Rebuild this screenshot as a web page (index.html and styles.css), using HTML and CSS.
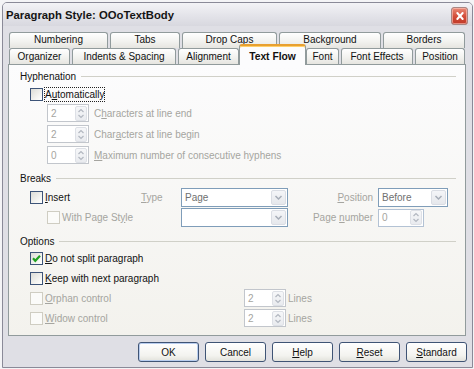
FILE: index.html
```html
<!DOCTYPE html>
<html lang="en">
<head>
    <meta charset="UTF-8">
    <meta name="viewport" content="width=device-width, initial-scale=1.0">
    <title>Paragraph Style: OOoTextBody</title>
    <link rel="stylesheet" href="styles.css">
</head>
<body>

<div class="window">
    <header class="titlebar">
        <span class="title">Paragraph Style: OOoTextBody</span>
        <span class="close-btn"></span>
    </header>

    <!-- tab rows: back row first, the selected row sits next to the page -->
    <nav class="tabs tabs-back">
        <div class="tab">Numbering</div>
        <div class="tab">Tabs</div>
        <div class="tab">Drop Caps</div>
        <div class="tab">Background</div>
        <div class="tab">Borders</div>
    </nav>
    <nav class="tabs tabs-front">
        <div class="tab">Organizer</div>
        <div class="tab">Indents &amp; Spacing</div>
        <div class="tab">Alignment</div>
        <div class="tab active">Text Flow</div>
        <div class="tab">Font</div>
        <div class="tab">Font Effects</div>
        <div class="tab">Position</div>
    </nav>

    <main class="page">
        <!-- Hyphenation -->
        <section class="group">
            <div class="group-title">Hyphenation</div>
            <div class="row check-row">
                <span class="check"></span>
                <span class="label focus">A<u>u</u>tomatically</span>
            </div>
            <div class="row spin-row">
                <span class="spin"><span class="val">2</span><span class="spin-btn"></span></span>
                <span class="label off">C<u>h</u>aracters at line end</span>
            </div>
            <div class="row spin-row">
                <span class="spin"><span class="val">2</span><span class="spin-btn"></span></span>
                <span class="label off">Char<u>a</u>cters at line begin</span>
            </div>
            <div class="row spin-row">
                <span class="spin"><span class="val">0</span><span class="spin-btn"></span></span>
                <span class="label off"><u>M</u>aximum number of consecutive hyphens</span>
            </div>
        </section>

        <!-- Breaks -->
        <section class="group">
            <div class="group-title">Breaks</div>
            <div class="breaks">
                <div class="cell">
                    <span class="check"></span>
                    <span class="label"><u>I</u>nsert</span>
                </div>
                <div class="cell off"><span><u>T</u>ype</span></div>
                <div class="cell"><span class="select wide"><span class="val">Page</span><span class="drop"></span></span></div>
                <div class="cell side-label off"><span><u>P</u>osition</span></div>
                <div class="cell"><span class="select short"><span class="val">Before</span><span class="drop"></span></span></div>

                <div class="cell sub">
                    <span class="check off"></span>
                    <span class="label off">With Page St<u>y</u>le</span>
                </div>
                <div class="cell"></div>
                <div class="cell"><span class="select wide"><span class="val"></span><span class="drop"></span></span></div>
                <div class="cell side-label off"><span>Page <u>n</u>umber</span></div>
                <div class="cell"><span class="spin page-no"><span class="val">0</span><span class="spin-btn"></span></span></div>
            </div>
        </section>

        <!-- Options -->
        <section class="group">
            <div class="group-title">Options</div>
            <div class="row opt-row">
                <span class="check checked">
                    <svg width="11" height="11" viewBox="0 0 11 11">
                        <path d="M2 5.2l2.3 2.6L9 2.8" fill="none" stroke="#21a121" stroke-width="2.2"/>
                    </svg>
                </span>
                <span class="label"><u>D</u>o not split paragraph</span>
            </div>
            <div class="row opt-row">
                <span class="check"></span>
                <span class="label"><u>K</u>eep with next paragraph</span>
            </div>
            <div class="row opt-row">
                <div class="opt-main">
                    <span class="check off"></span>
                    <span class="label off"><u>O</u>rphan control</span>
                </div>
                <span class="spin"><span class="val">2</span><span class="spin-btn"></span></span>
                <span class="label lines off">Lines</span>
            </div>
            <div class="row opt-row">
                <div class="opt-main">
                    <span class="check off"></span>
                    <span class="label off"><u>W</u>idow control</span>
                </div>
                <span class="spin"><span class="val">2</span><span class="spin-btn"></span></span>
                <span class="label lines off">Lines</span>
            </div>
        </section>
    </main>

    <footer class="buttons">
        <button class="btn default">OK</button>
        <button class="btn">Cancel</button>
        <button class="btn"><u>H</u>elp</button>
        <button class="btn"><u>R</u>eset</button>
        <button class="btn"><u>S</u>tandard</button>
    </footer>
</div>

</body>
</html>
```

FILE: styles.css
```css
:root {
    --frame-bg: #dfdfe5;
    --frame-border: #8a8a98;
    --tab-border: #919b9c;
    --page-top: #fcfcfd;
    --page-bottom: #f3f2ed;
    --line-color: #d0d0c8;
    --text-color: #111111;
    --disabled-color: #a5a5a0;
    --check-border: #3d5478;
    --field-border: #7f9db9;
    --spin-border: #c2c6cc;
    --font-ui: 'Liberation Sans', Arial, sans-serif;
}

/* --- Reset --- */
* { margin: 0; padding: 0; box-sizing: border-box; }
body {
    width: 474px;
    height: 369px;
    background: #f4f4f6;
    font-family: var(--font-ui);
    font-size: 10px;
    color: var(--text-color);
    overflow: hidden;
}
u { text-underline-offset: 1px; }

/* --- Window frame --- */
.window {
    margin: 2px 1px 0 2px;
    height: 366px;
    background: var(--frame-bg);
    border: 1px solid var(--frame-border);
    border-radius: 5px 5px 0 0;
}

.titlebar {
    height: 23px;
    display: flex;
    align-items: center;
    justify-content: space-between;
    padding: 1px 4px 0 3px;
    background: linear-gradient(#f3f3f6, #e2e2e8 60%, #d8d8df);
    border-radius: 4px 4px 0 0;
}
.title {
    font-size: 11.3px;
    font-weight: bold;
    color: #151515;
}

/* red close box with a white cross drawn from two bars */
.close-btn {
    flex: none;
    width: 17px;
    height: 18px;
    margin-top: 2px;
    display: flex;
    align-items: center;
    justify-content: center;
    background-color: #d24b37;
    background-image: linear-gradient(#e98a77, #d24b37 55%, #c03a29);
    border: 1px solid #a88784;
    border-radius: 3px;
    box-shadow: inset 0 0 0 1px rgba(255, 200, 190, 0.6);
}
.close-btn::before,
.close-btn::after {
    content: '';
    position: absolute;
    width: 10px;
    height: 2px;
    border-radius: 1px;
    background: #ffffff;
    transform: rotate(48deg);
}
.close-btn::after { transform: rotate(-48deg); }

/* --- Tabs --- */
.tabs {
    display: grid;
    column-gap: 2px;
    height: 16px;
    margin: 0 7px 0 6px;
}
.tabs-back {
    margin-top: 6px;
    grid-template-columns: 99px 70px 95px 102px 82px;
}
.tabs-back .tab { padding-bottom: 2px; }
.tabs-front {
    grid-template-columns: 61px 104px 61px 63px 33px 72px 50px;
}
.tab {
    display: flex;
    align-items: center;
    justify-content: center;
    border: 1px solid var(--tab-border);
    border-bottom: none;
    border-radius: 3px 3px 0 0;
    background: linear-gradient(#ffffff, #f1f1ee 60%, #e6e5e0);
    white-space: nowrap;
}
.tab.active {
    position: relative;
    z-index: 1;
    margin: -4px -2px -1px;
    border-top: 2px solid #e8a030;
    box-shadow: inset 0 1px 0 #ffd06a;
    background: var(--page-top);
    font-weight: bold;
    font-size: 10.3px;
    padding-top: 1px;
}

/* --- Tab page --- */
.page {
    height: 272px;
    margin: 0 6px 0 5px;
    padding: 4px 9px 0 11px;
    border: 1px solid var(--tab-border);
    background: linear-gradient(var(--page-top), var(--page-bottom));
}

.group + .group { margin-top: 7px; }
.group-title {
    height: 14px;
    display: flex;
    align-items: center;
    gap: 5px;
}
.group-title::after {
    content: '';
    flex: 1;
    height: 1px;
    background: var(--line-color);
}

.row {
    display: flex;
    align-items: center;
    margin-left: 10px;
}
.check-row { height: 18px; margin-top: 2px; }
.spin-row { height: 18px; margin-top: 3px; }
.check-row + .spin-row { margin-top: 1px; }
.spin-row .spin { margin-left: 17px; }
.spin-row .label { margin-left: 5px; }
.opt-row { height: 20px; }
.opt-main {
    width: 214px;
    display: flex;
    align-items: center;
}
.lines { margin-left: 5px; }

.label {
    margin-left: 2px;
    white-space: nowrap;
}
.off { color: var(--disabled-color); }
.focus {
    margin-left: 1px;
    border: 1px dotted #222;
    line-height: 13px;
}

/* --- Checkbox --- */
.check {
    flex: none;
    width: 13px;
    height: 13px;
    display: flex;
    align-items: center;
    justify-content: center;
    border: 1px solid var(--check-border);
    background: linear-gradient(135deg, #dcdcd6, #f6f6f3 70%, #ffffff);
}
.check.off {
    border-color: #cfcdc2;
    background: #fbfbf9;
}

/* --- Spin fields and selects --- */
.spin, .select {
    flex: none;
    height: 18px;
    display: flex;
    align-items: center;
    justify-content: space-between;
    background: #fff;
    border: 1px solid var(--spin-border);
    padding: 0 1px 0 3px;
    color: var(--disabled-color);
}
.spin { width: 42px; }
.spin.page-no { width: 46px; border-color: #b3c2d4; }
.select {
    height: 19px;
    border-color: var(--field-border);
    color: #707070;
}
.select.wide { width: 107px; }
.select.short { width: 70px; }

.spin-btn {
    width: 12px;
    height: 15px;
    border: 1px solid #dde0e6;
    border-radius: 2px;
    background:
        url("data:image/svg+xml,%3Csvg xmlns='http://www.w3.org/2000/svg' width='10' height='13'%3E%3Cpath d='M2.5 5l2.5-2.5L7.5 5M2.5 8l2.5 2.5L7.5 8' fill='none' stroke='%23b2b7c0' stroke-width='1.2'/%3E%3C/svg%3E") center no-repeat,
        linear-gradient(#f6f7f9, #e9ebef);
}
.drop {
    width: 15px;
    height: 15px;
    border: 1px solid #dadde4;
    border-radius: 2px;
    background:
        url("data:image/svg+xml,%3Csvg xmlns='http://www.w3.org/2000/svg' width='13' height='13'%3E%3Cpath d='M3.5 5l3 3 3-3' fill='none' stroke='%23a7adb8' stroke-width='1.5'/%3E%3C/svg%3E") center no-repeat,
        linear-gradient(#f4f5f8, #e6e8ec);
}

/* --- Breaks grid --- */
.breaks {
    display: grid;
    grid-template-columns: 111px 40px 107px 90px auto;
    grid-template-rows: 19px 19px;
    row-gap: 1px;
    margin: 3px 0 0 10px;
}
.breaks .cell {
    display: flex;
    align-items: center;
    white-space: nowrap;
}
.breaks .sub { padding-left: 17px; }
.side-label {
    justify-content: flex-end;
    padding-right: 5px;
}

/* --- Buttons --- */
.buttons {
    display: flex;
    justify-content: flex-end;
    gap: 6px;
    margin: 6px 5px 0 0;
}
.btn {
    width: 61px;
    height: 20px;
    font-family: var(--font-ui);
    font-size: 10px;
    color: var(--text-color);
    border: 1px solid #3f5475;
    border-radius: 3px;
    background: linear-gradient(#ffffff, #f3f3ef 70%, #e2e2dc);
}
.btn.default {
    box-shadow: inset 0 0 0 1px #b8cdef;
}
```
